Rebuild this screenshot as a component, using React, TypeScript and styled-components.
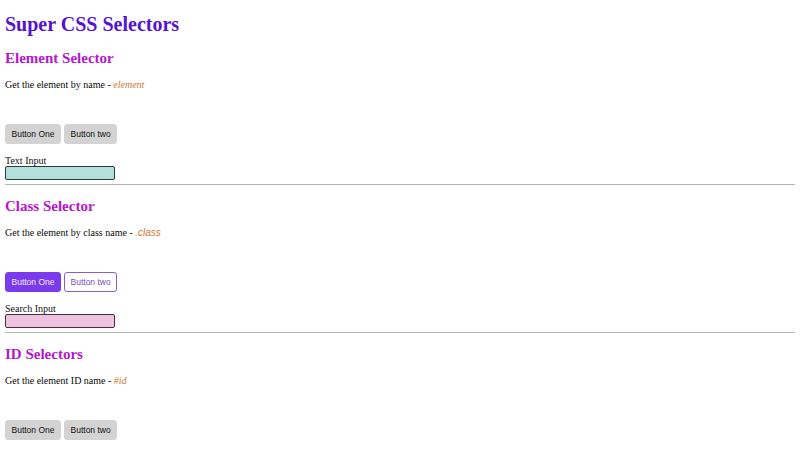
import styled, { createGlobalStyle } from 'styled-components'

const GlobalStyle = createGlobalStyle`
	html, body {
		margin: 0;
		padding: 0;
		background: #ffffff;
	}
	body {
		font-family: 'Liberation Serif', 'Times New Roman', serif;
		font-size: 10px;
		color: #111;
	}
`

const Page = styled.main`
	padding: 0 5px;
	display: flex;
	flex-direction: column;
`

const Title = styled.h1`
	margin: 12px 0 1px;
	font-size: 20px;
	line-height: 24px;
	font-weight: bold;
	color: #5414cf;
`

const Section = styled.section`
	display: flex;
	flex-direction: column;
`

const Heading = styled.h2`
	margin: 12px 0 0;
	font-size: 15px;
	line-height: 18px;
	font-weight: bold;
	color: #b516d0;
`

const Text = styled.p`
	margin: 12px 0 0;
	font-size: 10px;
	line-height: 12px;
	color: #0a0a0a;
`

const Selector = styled.em<{ $sans?: boolean }>`
	color: #c97a30;
	font-style: italic;
	font-family: ${(p) => (p.$sans ? "'Liberation Sans', Arial, sans-serif" : 'inherit')};
`

const ButtonRow = styled.div`
	display: flex;
	gap: 3px;
	margin-top: 33px;
`

const Button = styled.button<{ $variant?: 'plain' | 'solid' | 'outline' }>`
	height: 20px;
	padding: 0 5.5px;
	border-radius: 3px;
	font-family: 'Liberation Sans', Arial, sans-serif;
	font-size: 8.5px;
	cursor: pointer;
	border: 1px solid
		${(p) => (p.$variant === 'solid' ? '#7c3aed' : p.$variant === 'outline' ? '#8b5bd6' : '#d3d3d3')};
	background: ${(p) => (p.$variant === 'solid' ? '#7c3aed' : p.$variant === 'outline' ? '#ffffff' : '#d3d3d3')};
	color: ${(p) => (p.$variant === 'solid' ? '#f3eaff' : p.$variant === 'outline' ? '#7a4fc4' : '#111')};
`

const Field = styled.label`
	display: flex;
	flex-direction: column;
	margin-top: 11px;
	font-size: 10px;
	line-height: 11px;
`

const Input = styled.input<{ $bg: string; $border: string }>`
	box-sizing: border-box;
	width: 110px;
	height: 14px;
	margin: 0;
	padding: 0 3px;
	border: 1px solid ${(p) => p.$border};
	border-radius: 2px;
	background: ${(p) => p.$bg};
`

const Rule = styled.hr`
	margin: 4px 0 0;
	border: 0;
	border-top: 1px solid #b4b4b4;
	height: 0;
`

export default function App() {
	return (
		<>
			<GlobalStyle />
			<Page>
				<Title>Super CSS Selectors</Title>
				<Section>
					<Heading>Element Selector</Heading>
					<Text>
						Get the element by name - <Selector>element</Selector>
					</Text>
					<ButtonRow>
						<Button>Button One</Button>
						<Button>Button two</Button>
					</ButtonRow>
					<Field>
						Text Input
						<Input type="text" $bg="#b3e0db" $border="#2e3a38" />
					</Field>
				</Section>
				<Rule />
				<Section>
					<Heading>Class Selector</Heading>
					<Text>
						Get the element by class name - <Selector $sans>.class</Selector>
					</Text>
					<ButtonRow>
						<Button $variant="solid">Button One</Button>
						<Button $variant="outline">Button two</Button>
					</ButtonRow>
					<Field>
						Search Input
						<Input type="search" $bg="#efc3e0" $border="#4a2d40" />
					</Field>
				</Section>
				<Rule />
				<Section>
					<Heading>ID Selectors</Heading>
					<Text>
						Get the element ID name - <Selector>#id</Selector>
					</Text>
					<ButtonRow>
						<Button>Button One</Button>
						<Button>Button two</Button>
					</ButtonRow>
				</Section>
			</Page>
		</>
	)
}
